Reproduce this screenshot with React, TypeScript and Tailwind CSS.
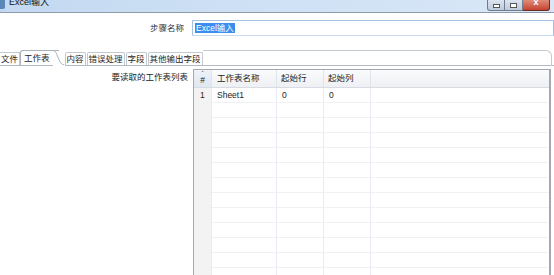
import React from "react";

const font = { fontFamily: '"Liberation Sans","Noto Sans CJK SC",sans-serif' };

function Tab({ label, selected, first }: { label: string; selected?: boolean; first?: boolean }) {
  if (selected) {
    return (
      <div className="relative flex h-[15px] items-center self-end border-l border-t border-[#a9b3c0] bg-white pl-[3px] pr-[9px] rounded-tl-[3px]">
        <span>{label}</span>
        <svg className="absolute -right-[6px] -top-[1px]" width="12" height="16" viewBox="0 0 12 16">
          <path d="M0 0.5 C5 0.5 5 15 11.5 15" fill="#fff" stroke="#a9b3c0" strokeWidth="1" />
          <rect x="0" y="15" width="12" height="1" fill="#fff" />
        </svg>
      </div>
    );
  }
  return (
    <div
      className={
        "flex h-[13px] items-center self-end border-r border-t border-[#c3c9d1] bg-white px-[1px] " +
        (first ? "" : "border-l rounded-t-[2px]")
      }
    >
      <span>{label}</span>
    </div>
  );
}

export default function App() {
  const rows = Array.from({ length: 13 }, (_, i) => i);
  return (
    <div className="relative h-[275px] w-[554px] overflow-hidden bg-white text-[8.5px] leading-none text-[#1e1e1e]" style={font}>
      {/* title bar */}
      <div className="flex h-[13px] items-start justify-between border-b border-[#8f9bab] bg-gradient-to-r from-[#c3d9f1] via-[#cfe1f5] to-[#d9e8f8]">
        <div className="flex items-start">
          <div className="h-[9px] w-[5px] rounded-br-[2px] bg-[#5a86b8]" />
          <span className="-mt-[2px] ml-[4px] text-[9px] text-[#111]">Excel输入</span>
        </div>
        <div className="mr-[4px] flex h-[11px] items-stretch">
          <div className="flex w-[18px] items-center justify-center rounded-bl-[3px] border border-t-0 border-[#6f7d8f] bg-gradient-to-b from-[#dbe4ef] to-[#bfcbdb]">
            <div className="mt-[2px] h-[4px] w-[7px] border border-[#555] bg-white" />
          </div>
          <div className="flex w-[18px] items-center justify-center border-b border-r border-[#6f7d8f] bg-gradient-to-b from-[#dbe4ef] to-[#bfcbdb]">
            <div className="h-[5px] w-[7px] border border-[#555] bg-white" />
          </div>
          <div className="flex w-[27px] items-start justify-center rounded-br-[3px] border-b border-r border-[#6b2a22] bg-gradient-to-b from-[#e08a7a] to-[#c3422f] text-[9px] font-bold leading-none text-white">
            <span className="-mt-[2px]">x</span>
          </div>
        </div>
      </div>

      {/* step name */}
      <div className="mt-[7px] flex h-[16px] items-center">
        <div className="w-[192px] pr-[8px] text-right text-[#333]">步骤名称</div>
        <div className="flex h-[16px] flex-1 items-center border border-[#a7c3e3] border-b-[#c9dbef] bg-white pl-[2px]">
          <span className="bg-[#3b8df0] px-[1px] py-[1px] text-white">Excel输入</span>
        </div>
      </div>

      {/* tabs */}
      <div className="mt-[14px] flex h-[16px] items-end border-b border-[#b2bac5]">
        <Tab label="文件" first />
        <Tab label="工作表" selected />
        <div className="w-[6px]" />
        <Tab label="内容" />
        <div className="w-[1px]" />
        <Tab label="错误处理" />
        <div className="w-[1px]" />
        <Tab label="字段" />
        <div className="w-[1px]" />
        <Tab label="其他输出字段" />
        <div className="mb-[-1px] mr-[2px] h-[16px] flex-1 rounded-tr-[6px] border-r border-t border-[#c3c9d1]" />
      </div>

      {/* content */}
      <div className="mt-[3px] flex">
        <div className="w-[193px] pr-[5px] pt-[4px] text-right text-[#222]">要读取的工作表列表</div>
        <div className="mr-[3px] h-[210px] flex-1 border border-r-2 border-[#a3a8b3] bg-white">
          <div className="grid h-[18px] grid-cols-[18px_65px_47px_47px_1fr] border-b border-[#d8dbe1] bg-gradient-to-b from-[#fafbfc] to-[#eef0f4] text-[#222]">
            <div className="relative flex items-center justify-center border-r border-[#dfe3ea] bg-gradient-to-b from-[#eef3f9] to-[#dfe7f1]">
              <span className="absolute left-1/2 top-[1px] -translate-x-1/2 text-[5px]">ˆ</span>
              <span className="mt-[3px]">#</span>
            </div>
            <div className="flex items-center border-r border-[#dfe3ea] pl-[5px]">工作表名称</div>
            <div className="flex items-center border-r border-[#dfe3ea] pl-[4px]">起始行</div>
            <div className="flex items-center border-r border-[#dfe3ea] pl-[4px]">起始列</div>
            <div />
          </div>
          {rows.map((i) => (
            <div key={i} className="grid h-[15px] grid-cols-[18px_65px_47px_47px_1fr] border-b border-[#f0f1f3]">
              <div className="flex items-center border-r border-[#e6ebf5] bg-[#f3f3f3] pl-[6px]">{i === 0 ? "1" : ""}</div>
              <div className="flex items-center border-r border-[#e6ebf5] pl-[5px]">{i === 0 ? "Sheet1" : ""}</div>
              <div className="flex items-center border-r border-[#e6ebf5] pl-[5px]">{i === 0 ? "0" : ""}</div>
              <div className="flex items-center border-r border-[#e6ebf5] pl-[5px]">{i === 0 ? "0" : ""}</div>
              <div />
            </div>
          ))}
        </div>
      </div>
    </div>
  );
}
